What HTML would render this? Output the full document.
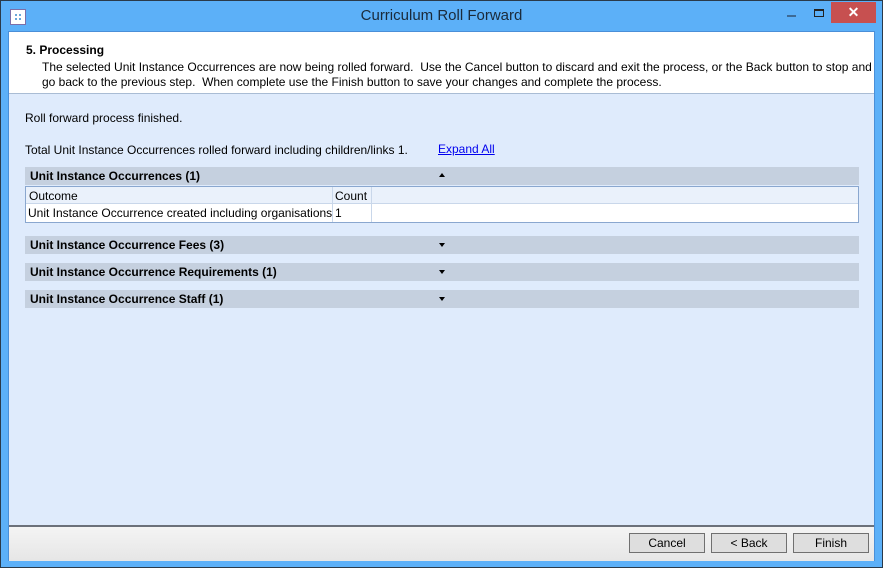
<!DOCTYPE html><html><head><style>
*{margin:0;padding:0;box-sizing:border-box}
body{width:883px;height:568px;background:#5cb0f8;font-family:"Liberation Sans",sans-serif;font-size:12px;color:#000;position:relative;overflow:hidden;border:1px solid #2a3a4a}
.abs{position:absolute}
.title{left:0;top:6px;width:881px;text-align:center;font-size:15px;color:#1a2a3a}
.client{left:7px;top:30px;width:867px;height:530px;background:#dfebfc;border:1px solid #4a8fd8}
.hdr{left:0;top:0;width:865px;height:62px;background:#fff;border-bottom:1px solid #a9bcd4}
.sec{left:16px;width:834px;height:18px;background:#c5d0df;font-weight:bold;font-size:12px;padding:2px 5px}
.tri{position:absolute;left:414px;top:7px;width:0;height:0;border-left:3px solid transparent;border-right:3px solid transparent}
.btn{top:501px;width:76px;height:20px;border:1px solid #707070;background:#dedede;text-align:center;line-height:18px}
.foot{left:0;top:493px;width:865px;height:36px;background:linear-gradient(#f4f4f4,#e6e6e6);border-top:2px solid #6c717a}
</style></head><body>
<div class="abs" style="left:9px;top:8px;width:16px;height:16px;border:1px solid #7d6fa8;background:#fff"><div style="margin:4px;width:6px;height:6px;border:2px dotted #6aa8d8"></div></div>
<div class="abs title">Curriculum Roll Forward</div>
<div class="abs" style="left:786px;top:14px;width:9px;height:2px;background:#3d6a95"></div>
<div class="abs" style="left:813px;top:8px;width:10px;height:8px;border:1px solid #222;border-top-width:2px"></div>
<div class="abs" style="left:830px;top:1px;width:45px;height:21px;background:#c75050;color:#fff;text-align:center;font-size:14px;font-weight:bold;line-height:21px">✕</div>
<div class="abs client">
<div class="abs hdr">
<div class="abs" style="left:17px;top:11px;font-weight:bold">5. Processing</div>
<div class="abs" style="left:33px;top:28px;line-height:15px;width:830px">The selected Unit Instance Occurrences are now being rolled forward.&nbsp; Use the Cancel button to discard and exit the process, or the Back button to stop and go back to the previous step.&nbsp; When complete use the Finish button to save your changes and complete the process.</div>
</div>
<div class="abs" style="left:16px;top:79px">Roll forward process finished.</div>
<div class="abs" style="left:16px;top:111px">Total Unit Instance Occurrences rolled forward including children/links 1.</div>
<div class="abs" style="left:429px;top:110px;color:#0000ee;text-decoration:underline">Expand All</div>
<div class="abs sec" style="top:135px">Unit Instance Occurrences (1)<span class="tri" style="border-bottom:4px solid #000;top:6px"></span></div>
<div class="abs" style="left:16px;top:154px;width:834px;height:37px;background:#fff;border:1px solid #8aa7cf">
<div class="abs" style="left:0;top:0;width:832px;height:17px;background:#eaf1fb;border-bottom:1px solid #c9d7ea"></div>
<div class="abs" style="left:306px;top:0;width:1px;height:35px;background:#c9d7ea"></div>
<div class="abs" style="left:345px;top:0;width:1px;height:35px;background:#c9d7ea"></div>
<div class="abs" style="left:3px;top:2px">Outcome</div><div class="abs" style="left:309px;top:2px">Count</div>
<div class="abs" style="left:2px;top:19px">Unit Instance Occurrence created including organisations</div><div class="abs" style="left:309px;top:19px">1</div>
</div>
<div class="abs sec" style="top:204px">Unit Instance Occurrence Fees (3)<span class="tri" style="border-top:4px solid #000"></span></div>
<div class="abs sec" style="top:231px">Unit Instance Occurrence Requirements (1)<span class="tri" style="border-top:4px solid #000"></span></div>
<div class="abs sec" style="top:258px">Unit Instance Occurrence Staff (1)<span class="tri" style="border-top:4px solid #000"></span></div>
<div class="abs foot"></div>
<div class="abs btn" style="left:620px">Cancel</div>
<div class="abs btn" style="left:702px">&lt; Back</div>
<div class="abs btn" style="left:784px">Finish</div>
</div>
</body></html>
